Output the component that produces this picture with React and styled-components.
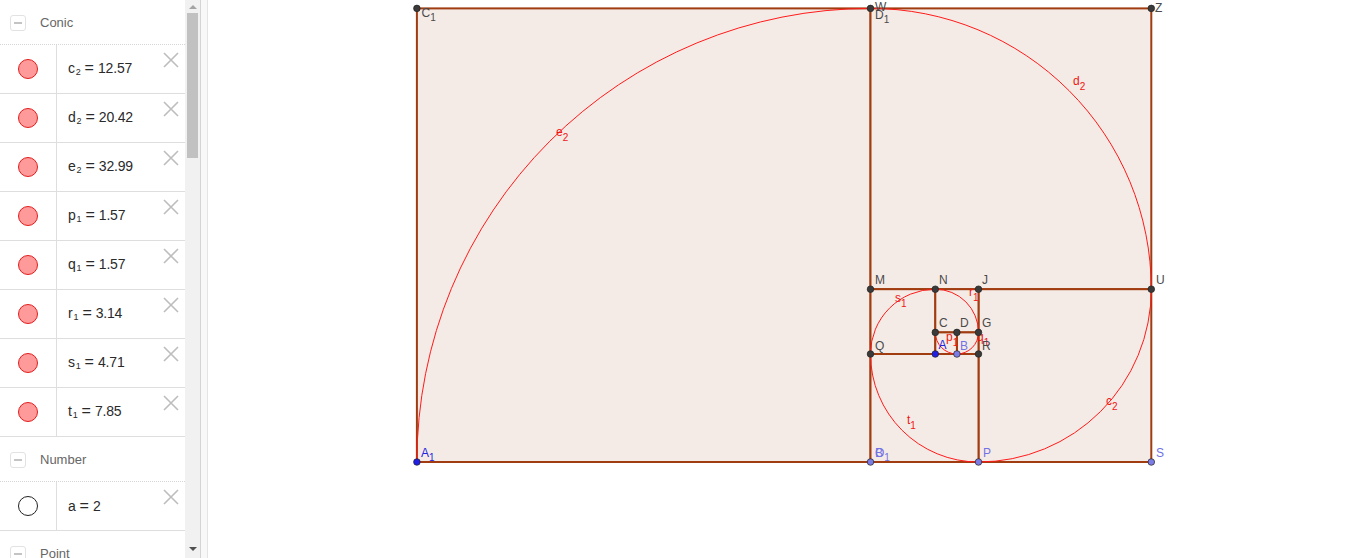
import React from 'react'
import styled, { createGlobalStyle } from 'styled-components'

const GlobalStyle = createGlobalStyle`
  html, body { margin: 0; padding: 0; overflow: hidden; background: #fff; }
  body { font-family: "Liberation Sans", Arial, sans-serif; }
`

// unit square size and origin (point A) of the construction
const U = 21.6
const OX = 935.3
const OY = 354
const px = (x) => OX + U * x
const py = (y) => OY - U * y

const conics = [
  ['c', '2', '12.57'],
  ['d', '2', '20.42'],
  ['e', '2', '32.99'],
  ['p', '1', '1.57'],
  ['q', '1', '1.57'],
  ['r', '1', '3.14'],
  ['s', '1', '4.71'],
  ['t', '1', '7.85'],
]

const squares = [
  [-24, -5, 21], [-3, 3, 13], [2, -5, 8], [-3, -5, 5],
  [-3, 0, 3], [0, 1, 2], [1, 0, 1], [0, 0, 1],
]

const arcs = [
  [[-24, -5], [-3, 16], 21],
  [[-3, 16], [10, 3], 13],
  [[10, 3], [2, -5], 8],
  [[2, -5], [-3, 0], 5],
  [[-3, 0], [0, 3], 3],
  [[0, 3], [2, 1], 2],
  [[2, 1], [1, 0], 1],
  [[1, 0], [0, 1], 1],
]

const pointColors = {
  dark: '#3a3a3a',
  blue: '#1f1fe6',
  light: '#7c7ce6',
}
const labelColors = {
  dark: '#4a4a4a',
  blue: '#2323e0',
  light: '#7272e4',
}

const points = [
  { x: -24, y: 16, k: 'dark' }, { x: -3, y: 16, k: 'dark' }, { x: 10, y: 16, k: 'dark' },
  { x: 10, y: 3, k: 'dark' }, { x: -3, y: 3, k: 'dark' }, { x: 0, y: 3, k: 'dark' },
  { x: 2, y: 3, k: 'dark' }, { x: 0, y: 1, k: 'dark' }, { x: 1, y: 1, k: 'dark' },
  { x: 2, y: 1, k: 'dark' }, { x: -3, y: 0, k: 'dark' }, { x: 2, y: 0, k: 'dark' },
  { x: 0, y: 0, k: 'blue' }, { x: 1, y: 0, k: 'light' }, { x: -24, y: -5, k: 'blue' },
  { x: -3, y: -5, k: 'light' }, { x: 2, y: -5, k: 'light' }, { x: 10, y: -5, k: 'light' },
]

const pointLabels = [
  ['C', '1', 421.5, 17, 'dark'], ['W', '', 875, 11, 'dark'], ['D', '1', 875, 18.5, 'dark'],
  ['Z', '', 1155, 11.5, 'dark'], ['U', '', 1156, 284, 'dark'], ['M', '', 875, 284, 'dark'],
  ['N', '', 939, 284, 'dark'], ['J', '', 982, 284, 'dark'], ['C', '', 939, 327, 'dark'],
  ['D', '', 960, 327, 'dark'], ['G', '', 982, 327, 'dark'], ['Q', '', 875, 350, 'dark'],
  ['R', '', 982, 350, 'dark'], ['A', '', 938.5, 349, 'blue'], ['B', '', 960, 350, 'light'],
  ['A', '1', 421, 457, 'blue'], ['O', '1', 875, 457, 'light'], ['B', '', 875, 457, 'light'],
  ['P', '', 983, 457, 'light'], ['S', '', 1156, 457, 'light'],
]

const arcLabels = [
  ['e', '2', 556, 136], ['d', '2', 1073, 85], ['c', '2', 1106, 405],
  ['t', '1', 907, 424], ['s', '1', 895, 302], ['p', '1', 946, 341],
  ['q', '1', 977, 341], ['r', '1', 969, 296],
]

const CloseIcon = () => (
  <svg width="16" height="16" viewBox="0 0 16 16">
    <path d="M1 1 L15 15 M15 1 L1 15" stroke="#bdbdbd" strokeWidth="1.6" fill="none" />
  </svg>
)

const Group = ({ title }) => (
  <GroupHeader>
    <CollapseBox><Minus /></CollapseBox>
    <GroupTitle>{title}</GroupTitle>
  </GroupHeader>
)

const Item = ({ name, sub, value, filled }) => (
  <Row>
    <MarkerCell><Marker $filled={filled} /></MarkerCell>
    <ValueCell>
      <Value>
        {name}{sub && <Sub>{sub}</Sub>} <Eq>=</Eq> {value}
      </Value>
      <CloseBtn><CloseIcon /></CloseBtn>
    </ValueCell>
  </Row>
)

const Construction = () => (
  <Canvas>
    <g transform="translate(-208 0)">
      {squares.map(([x, y, s], i) => (
        <rect key={i} x={px(x)} y={py(y + s)} width={U * s} height={U * s}
          fill="#f5ebe6" stroke="#a03c10" strokeWidth="2" />
      ))}
      {arcs.map(([a, b, r], i) => (
        <path key={i}
          d={`M${px(a[0])} ${py(a[1])} A${U * r} ${U * r} 0 0 1 ${px(b[0])} ${py(b[1])}`}
          fill="none" stroke="#ff1a1a" strokeWidth="1" />
      ))}
      {arcLabels.map(([t, s, x, y], i) => (
        <text key={i} x={x} y={y} fill="#f01414" fontSize="12">
          {t}<tspan dy="4.5" fontSize="10">{s}</tspan>
        </text>
      ))}
      {points.map((p, i) => (
        <circle key={i} cx={px(p.x)} cy={py(p.y)} r="3.3"
          fill={pointColors[p.k]} stroke="#222" strokeWidth="0.7" />
      ))}
      {pointLabels.map(([t, s, x, y, k], i) => (
        <text key={i} x={x} y={y} fill={labelColors[k]} fontSize="12">
          {t}{s && <tspan dy="4" fontSize="10">{s}</tspan>}
        </text>
      ))}
    </g>
  </Canvas>
)

const App = () => {
  return (
    <>
      <GlobalStyle />
      <Layout>
        <Sidebar>
          <List>
            <Group title="Conic" />
            {conics.map(([n, s, v]) => (
              <Item key={n} name={n} sub={s} value={v} filled />
            ))}
            <Group title="Number" />
            <Item name="a" value="2" />
            <Group title="Point" />
          </List>
          <Scrollbar>
            <ArrowUp />
            <Thumb />
            <Track />
            <ArrowDown />
          </Scrollbar>
        </Sidebar>
        <Splitter />
        <Graphics>
          <Construction />
        </Graphics>
      </Layout>
    </>
  )
}

export default App

const Layout = styled.div`
  display: flex;
  width: 1366px;
  height: 558px;
  overflow: hidden;
`
const Sidebar = styled.aside`
  display: flex;
  width: 200px;
  height: 100%;
  flex-shrink: 0;
`
const List = styled.div`
  width: 185px;
  height: 100%;
  overflow: hidden;
  background: #fff;
`
const GroupHeader = styled.div`
  display: flex;
  align-items: center;
  gap: 14px;
  height: 44px;
  padding: 1px 0 0 10px;
  box-sizing: border-box;
  border-bottom: 1px dotted #d6d6d6;
  height: 45px;
`
const CollapseBox = styled.div`
  display: flex;
  align-items: center;
  justify-content: center;
  width: 14px;
  height: 14px;
  border: 1px solid #e2e2e2;
  border-radius: 3px;
`
const Minus = styled.span`
  width: 8px;
  height: 2px;
  background: #c4c4c4;
`
const GroupTitle = styled.span`
  font-size: 13px;
  color: #666;
`
const Row = styled.div`
  display: flex;
  height: 48px;
  border-bottom: 1px solid #dedede;
`
const MarkerCell = styled.div`
  display: flex;
  align-items: center;
  justify-content: center;
  width: 56px;
  border-right: 1px solid #dedede;
`
const Marker = styled.span`
  width: 18px;
  height: 18px;
  border-radius: 50%;
  background: ${(p) => (p.$filled ? '#ff9a9a' : '#fff')};
  border: 1px solid ${(p) => (p.$filled ? '#e31c1c' : '#222')};
`
const ValueCell = styled.div`
  display: flex;
  flex: 1;
  padding-left: 11px;
`
const Value = styled.div`
  flex: 1;
  align-self: center;
  margin-top: -1px;
  font-size: 14px;
  letter-spacing: -0.2px;
  color: #2a2a2a;
  white-space: nowrap;
`
const Sub = styled.sub`
  font-size: 9px;
  vertical-align: -2px;
  margin-left: 1px;
`
const Eq = styled.span`
  display: inline-block;
  transform: scaleX(1.15);
  margin: 0 1px;
`
const CloseBtn = styled.div`
  width: 16px;
  height: 16px;
  margin: 7px 6px 0 0;
`
const Scrollbar = styled.div`
  display: flex;
  flex-direction: column;
  align-items: center;
  width: 15px;
  background: #f1f1f1;
`
const ArrowUp = styled.div`
  width: 0;
  height: 0;
  margin: 5px 0 4px;
  border-left: 4px solid transparent;
  border-right: 4px solid transparent;
  border-bottom: 4px solid #a3a3a3;
`
const Thumb = styled.div`
  width: 11px;
  height: 145px;
  background: #c1c1c1;
`
const Track = styled.div`
  flex: 1;
`
const ArrowDown = styled.div`
  width: 0;
  height: 0;
  margin: 0 0 7px;
  border-left: 4px solid transparent;
  border-right: 4px solid transparent;
  border-top: 4px solid #505050;
`
const Splitter = styled.div`
  width: 6px;
  flex-shrink: 0;
  background: #f8f8f8;
  border-left: 1px solid #d4d4d4;
  border-right: 1px solid #e4e4e4;
`
const Graphics = styled.main`
  flex: 1;
  height: 100%;
  background: #fff;
`
const Canvas = styled.svg`
  display: block;
  width: 100%;
  height: 100%;
  font-family: "Liberation Sans", Arial, sans-serif;
`
